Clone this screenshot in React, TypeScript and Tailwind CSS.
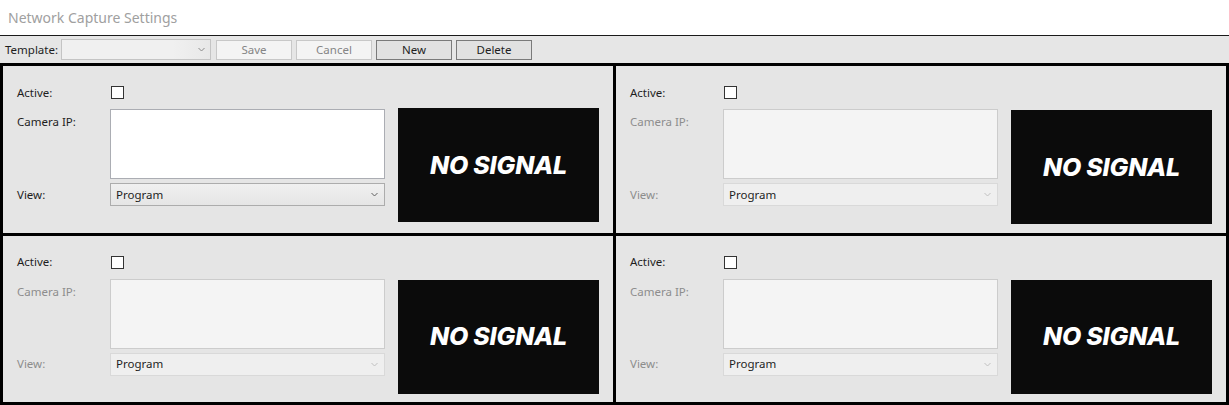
import React from "react";

const Chevron = ({ color = "#606060" }: { color?: string }) => (
  <svg width="7" height="5" viewBox="0 0 7 5" className="shrink-0">
    <path d="M0.5 1 L3.5 4 L6.5 1" fill="none" stroke={color} strokeWidth="1" />
  </svg>
);

function Panel({ enabled, low }: { enabled: boolean; low?: boolean }) {
  const dim = enabled ? "text-[#1e1e1e]" : "text-[#8d8d8d]";
  return (
    <div className="bg-[#e5e5e5] flex pl-[14px] pr-[12px] pt-[20px]">
      <div className="flex flex-col w-[368px]">
        <div className="flex items-center h-[13px]">
          <div className="w-[93px] text-[#1e1e1e]">Active:</div>
          <div className="w-[13px] h-[13px] border border-[#333333] bg-white ml-[1px]" />
        </div>
        <div className="flex mt-[10px]">
          <div className={`w-[93px] pt-[4px] ${dim}`}>Camera IP:</div>
          <div
            className={
              enabled
                ? "w-[275px] h-[70px] border border-[#abadb3] bg-white"
                : "w-[275px] h-[70px] border border-[#cccccc] bg-[#f4f4f4]"
            }
          />
        </div>
        <div className="flex items-center mt-[4px]">
          <div className={`w-[93px] ${dim}`}>View:</div>
          <div
            className={
              enabled
                ? "w-[275px] h-[23px] border border-[#acacac] bg-[linear-gradient(#f0f0f0,#e5e5e5)] flex items-center justify-between pl-[5px] pr-[6px] text-[#1e1e1e]"
                : "w-[275px] h-[23px] border border-[#d9d9d9] bg-[#efefef] flex items-center justify-between pl-[5px] pr-[6px] text-[#1e1e1e]"
            }
          >
            <span>Program</span>
            <Chevron color={enabled ? "#606060" : "#c0c0c0"} />
          </div>
        </div>
      </div>
      <div
        className={
          low
            ? "ml-[13px] mt-[24px] w-[201px] h-[114px] bg-[#0b0b0b] flex items-center justify-center"
            : "ml-[13px] mt-[22px] w-[201px] h-[114px] bg-[#0b0b0b] flex items-center justify-center"
        }
      >
        <span className="text-white italic font-extrabold text-[25px] tracking-[-0.2px] font-['Inter',sans-serif] leading-none">
          NO SIGNAL
        </span>
      </div>
    </div>
  );
}

export default function App() {
  return (
    <div className="w-[1229px] h-[405px] bg-white overflow-hidden font-['Noto_Sans','Open_Sans',sans-serif] text-[11.5px]">
      <div className="h-[35px] flex items-center pl-[8px] text-[14px] text-[#a0a0a0]">
        Network Capture Settings
      </div>
      <div className="h-px bg-[#1a1a1a]" />
      <div className="h-[27px] bg-[#e6e6e6] flex items-center pl-[5px]">
        <span className="text-[#1e1e1e] w-[56px]">Template:</span>
        <div className="w-[150px] h-[21px] border border-[#c4c4c4] bg-[linear-gradient(90deg,#f0f0f0,#f0f0f0_75%,#e8e8e8)] flex items-center justify-end pr-[5px]">
          <Chevron color="#8a8a8a" />
        </div>
        <div className="ml-[5px] w-[76px] h-[20px] border border-[#c8c8c8] bg-[#f4f4f4] flex items-center justify-center text-[#858585]">
          Save
        </div>
        <div className="ml-[4px] w-[76px] h-[20px] border border-[#c8c8c8] bg-[#f4f4f4] flex items-center justify-center text-[#858585]">
          Cancel
        </div>
        <div className="ml-[4px] w-[76px] h-[20px] border border-[#7a7a7a] bg-[#e1e1e1] flex items-center justify-center text-[#1e1e1e]">
          New
        </div>
        <div className="ml-[4px] w-[76px] h-[20px] border border-[#7a7a7a] bg-[#e1e1e1] flex items-center justify-center text-[#1e1e1e]">
          Delete
        </div>
      </div>
      <div className="h-[342px] bg-black p-[3px] grid grid-cols-2 grid-rows-2 gap-[3px]">
        <Panel enabled={true} />
        <Panel enabled={false} low />
        <Panel enabled={false} low />
        <Panel enabled={false} low />
      </div>
    </div>
  );
}
